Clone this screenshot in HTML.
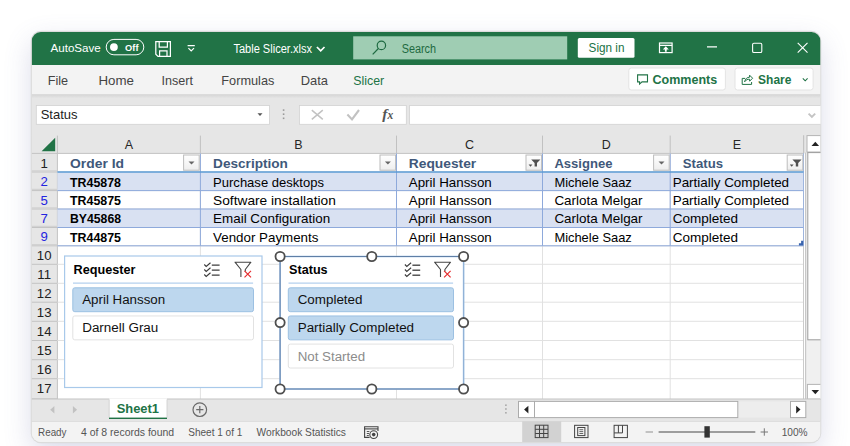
<!DOCTYPE html>
<html lang="en"><head><meta charset="utf-8"><title>Table Slicer.xlsx - Excel</title>
<style>
html,body{margin:0;padding:0;background:#fff;}
body{width:850px;height:446px;overflow:hidden;position:relative;font-family:"Liberation Sans", sans-serif;}
#shadow{position:absolute;left:31.7px;top:32.0px;width:788.8px;height:410.0px;border-radius:9px;box-shadow:0 0 0 1.3px #dcdcdc,0 10px 28px 0 rgba(98,102,165,0.24);background:#f3f3f3;}
svg{position:absolute;left:0;top:0;}
svg text{font-family:"Liberation Sans", sans-serif;white-space:pre;}
</style></head>
<body>
<div id="shadow"></div>
<svg width="850" height="446" viewBox="0 0 850 446">
<defs>
<clipPath id="win"><rect x="31.7" y="32.0" width="788.8" height="410.0" rx="9" ry="9"/></clipPath>
<linearGradient id="fb" x1="0" y1="0" x2="0" y2="1"><stop offset="0" stop-color="#ffffff"/><stop offset="1" stop-color="#eeeeee"/></linearGradient>
<linearGradient id="sh" x1="0" y1="0" x2="0" y2="1"><stop offset="0" stop-color="#d4d4d4"/><stop offset="1" stop-color="#e6e6e6"/></linearGradient>
</defs>
<g clip-path="url(#win)">
<rect x="31.70" y="32.00" width="788.80" height="33.00" fill="#217346" />
<text x="50.50" y="51.70" font-size="11.5" fill="#fff" font-weight="normal" text-anchor="start" textLength="50.30" lengthAdjust="spacingAndGlyphs" >AutoSave</text>
<rect x="106.2" y="39.4" width="37.6" height="15.4" rx="7.7" fill="none" stroke="#fff" stroke-width="1"/>
<circle cx="113.9" cy="47.1" r="3.9" fill="#fff"/>
<text x="125.10" y="50.70" font-size="9.5" fill="#fff" font-weight="bold" text-anchor="start" textLength="13.40" lengthAdjust="spacingAndGlyphs" >Off</text>
<g fill="none" stroke="#fff" stroke-width="1.25"><path d="M155.8 41.6h14.6v14.8h-12.4l-2.2-2.2z"/><path d="M159.2 41.6v5.4h8.2v-5.4"/><path d="M159.6 56.4v-5.6h7.4v5.6"/></g>
<g fill="none" stroke="#fff" stroke-width="1.2"><path d="M187.6 45.6h7.2"/><path d="M188.4 48.2l2.8 2.8l2.8-2.8"/></g>
<text x="233.40" y="53.00" font-size="12" fill="#fff" font-weight="normal" text-anchor="start" textLength="78.60" lengthAdjust="spacingAndGlyphs" >Table Slicer.xlsx</text>
<path d="M316.9 47.0l3.8 3.8l3.8-3.8" fill="none" stroke="#fff" stroke-width="1.7"/>
<rect x="353.20" y="36.30" width="214.00" height="23.10" fill="#9fcdb3" />
<g fill="none" stroke="#1e6a41" stroke-width="1.2"><circle cx="381.4" cy="45.4" r="4.2"/><path d="M378.4 48.5l-5.7 5.8"/></g>
<text x="401.70" y="52.60" font-size="12" fill="#1e6a41" font-weight="normal" text-anchor="start" textLength="34.40" lengthAdjust="spacingAndGlyphs" >Search</text>
<rect x="577.8" y="38.1" width="56.7" height="19.6" rx="1.5" fill="#fff"/>
<text x="588.60" y="52.20" font-size="12" fill="#217346" font-weight="normal" text-anchor="start" textLength="35.90" lengthAdjust="spacingAndGlyphs" >Sign in</text>
<g fill="none" stroke="#fff" stroke-width="1.2"><rect x="659.5" y="43.0" width="12.6" height="9.6"/><path d="M659.5 45.4h12.6"/></g><path d="M662.8 49.4l3-3.2l3 3.2h-2.1v2.4h-1.8v-2.4z" fill="#fff"/>
<line x1="707.00" y1="46.90" x2="717.00" y2="46.90" stroke="#fff" stroke-width="1.1" />
<rect x="752.6" y="43.3" width="9.2" height="9.2" rx="1.3" fill="none" stroke="#fff" stroke-width="1.1"/>
<path d="M797.7 42.8l9.8 9.8M807.5 42.8l-9.8 9.8" fill="none" stroke="#fff" stroke-width="1.1"/>
<rect x="31.70" y="65.00" width="788.80" height="29.30" fill="#f3f3f3" />
<text x="47.70" y="84.90" font-size="13" fill="#444" font-weight="normal" text-anchor="start" textLength="20.40" lengthAdjust="spacingAndGlyphs" >File</text>
<text x="98.50" y="84.90" font-size="13" fill="#444" font-weight="normal" text-anchor="start" textLength="35.50" lengthAdjust="spacingAndGlyphs" >Home</text>
<text x="161.60" y="84.90" font-size="13" fill="#444" font-weight="normal" text-anchor="start" textLength="31.40" lengthAdjust="spacingAndGlyphs" >Insert</text>
<text x="221.30" y="84.90" font-size="13" fill="#444" font-weight="normal" text-anchor="start" textLength="53.10" lengthAdjust="spacingAndGlyphs" >Formulas</text>
<text x="300.70" y="84.90" font-size="13" fill="#444" font-weight="normal" text-anchor="start" textLength="27.20" lengthAdjust="spacingAndGlyphs" >Data</text>
<text x="353.20" y="84.90" font-size="13" fill="#217346" font-weight="normal" text-anchor="start" textLength="31.00" lengthAdjust="spacingAndGlyphs" >Slicer</text>
<rect x="628.8" y="68.0" width="96.6" height="22" rx="2.5" fill="#fff" stroke="#e3e3e3" stroke-width="1"/>
<rect x="735.0" y="68.0" width="78.1" height="22" rx="2.5" fill="#fff" stroke="#e3e3e3" stroke-width="1"/>
<path d="M637.6 74.9h9.9v7h-5.5l-2.4 2.2v-2.2h-2z" fill="none" stroke="#217346" stroke-width="1.1"/>
<text x="652.60" y="84.00" font-size="12.3" fill="#217346" font-weight="bold" text-anchor="start" textLength="64.60" lengthAdjust="spacingAndGlyphs" >Comments</text>
<g fill="none" stroke="#217346" stroke-width="1"><path d="M745.2 78.4h-3v6h9.4v-2.4"/><path d="M744.6 81.8c0.6-3 2.6-4.6 5-4.6v-2l3 3l-3 3v-2c-2 0-3.6 0.6-5 2.6z"/></g>
<text x="758.10" y="84.00" font-size="12.3" fill="#217346" font-weight="bold" text-anchor="start" textLength="33.30" lengthAdjust="spacingAndGlyphs" >Share</text>
<path d="M802.8 78.4l2.4 2.4l2.4-2.4" fill="none" stroke="#217346" stroke-width="1.1"/>
<rect x="31.70" y="94.30" width="788.80" height="41.70" fill="#e6e6e6" />
<rect x="31.7" y="94.3" width="788.6" height="4" fill="url(#sh)"/>
<rect x="36.3" y="105.5" width="233.1" height="18.8" fill="#fff" stroke="#d2d2d2" stroke-width="0.8"/>
<text x="40.70" y="118.70" font-size="12.7" fill="#222" font-weight="normal" text-anchor="start" textLength="36.90" lengthAdjust="spacingAndGlyphs" >Status</text>
<path d="M257.5 113.2h5l-2.5 2.8z" fill="#555"/>
<rect x="282.8" y="109.3" width="1.6" height="1.6" fill="#9a9a9a"/>
<rect x="282.8" y="113.4" width="1.6" height="1.6" fill="#9a9a9a"/>
<rect x="282.8" y="117.5" width="1.6" height="1.6" fill="#9a9a9a"/>
<rect x="299.4" y="105.5" width="106.9" height="18.8" fill="#fff" stroke="#d2d2d2" stroke-width="0.8"/>
<path d="M311.8 110.2l11 9.2M322.8 110.2l-11 9.2" stroke="#c2c2c2" stroke-width="1.5" fill="none"/>
<path d="M347.4 114.6l4.6 4.8l7-9.4" stroke="#c2c2c2" stroke-width="2.1" fill="none"/>
<text x="382.20" y="118.60" font-size="15.5" fill="#555" font-weight="bold" text-anchor="start" style='font-family:"Liberation Serif", serif' font-style="italic">f</text>
<text x="387.60" y="119.40" font-size="11.5" fill="#555" font-weight="bold" text-anchor="start" style='font-family:"Liberation Serif", serif' font-style="italic">x</text>
<rect x="409.6" y="105.5" width="420" height="18.8" fill="#fff" stroke="#d2d2d2" stroke-width="0.8"/>
<path d="M808.6 113.6l3.3 3.4l3.3-3.4" stroke="#c4c4c4" stroke-width="1.9" fill="none"/>
<rect x="31.70" y="135.30" width="788.80" height="263.70" fill="#e6e6e6" />
<rect x="57.40" y="153.40" width="746.20" height="245.60" fill="#fff" />
<path d="M55.2 137.8v13.4h-13.6z" fill="#217346"/>
<line x1="57.40" y1="135.60" x2="57.40" y2="153.40" stroke="#b8b8b8" stroke-width="0.8" />
<line x1="200.40" y1="135.60" x2="200.40" y2="153.40" stroke="#b8b8b8" stroke-width="0.8" />
<line x1="396.50" y1="135.60" x2="396.50" y2="153.40" stroke="#b8b8b8" stroke-width="0.8" />
<line x1="542.50" y1="135.60" x2="542.50" y2="153.40" stroke="#b8b8b8" stroke-width="0.8" />
<line x1="670.20" y1="135.60" x2="670.20" y2="153.40" stroke="#b8b8b8" stroke-width="0.8" />
<line x1="803.60" y1="135.60" x2="803.60" y2="153.40" stroke="#b8b8b8" stroke-width="0.8" />
<line x1="31.70" y1="153.40" x2="803.60" y2="153.40" stroke="#c3c3c3" stroke-width="1" />
<text x="128.90" y="149.40" font-size="12.5" fill="#262626" font-weight="normal" text-anchor="middle" >A</text>
<text x="298.45" y="149.40" font-size="12.5" fill="#262626" font-weight="normal" text-anchor="middle" >B</text>
<text x="469.50" y="149.40" font-size="12.5" fill="#262626" font-weight="normal" text-anchor="middle" >C</text>
<text x="606.35" y="149.40" font-size="12.5" fill="#262626" font-weight="normal" text-anchor="middle" >D</text>
<text x="736.90" y="149.40" font-size="12.5" fill="#262626" font-weight="normal" text-anchor="middle" >E</text>
<line x1="57.40" y1="153.40" x2="57.40" y2="399.00" stroke="#c3c3c3" stroke-width="1" />
<line x1="31.70" y1="172.00" x2="57.40" y2="172.00" stroke="#c3c3c3" stroke-width="1" />
<line x1="31.70" y1="170.80" x2="57.40" y2="170.80" stroke="#d2d2d2" stroke-width="1.2" />
<text x="44.20" y="167.60" font-size="13.2" fill="#222" font-weight="normal" text-anchor="middle" >1</text>
<line x1="31.70" y1="190.60" x2="57.40" y2="190.60" stroke="#c3c3c3" stroke-width="1" />
<line x1="31.70" y1="189.40" x2="57.40" y2="189.40" stroke="#d2d2d2" stroke-width="1.2" />
<text x="44.20" y="186.20" font-size="13.2" fill="#2424e0" font-weight="normal" text-anchor="middle" >2</text>
<line x1="31.70" y1="209.00" x2="57.40" y2="209.00" stroke="#c3c3c3" stroke-width="1" />
<line x1="31.70" y1="207.80" x2="57.40" y2="207.80" stroke="#d2d2d2" stroke-width="1.2" />
<text x="44.20" y="204.60" font-size="13.2" fill="#2424e0" font-weight="normal" text-anchor="middle" >5</text>
<line x1="31.70" y1="227.50" x2="57.40" y2="227.50" stroke="#c3c3c3" stroke-width="1" />
<line x1="31.70" y1="226.30" x2="57.40" y2="226.30" stroke="#d2d2d2" stroke-width="1.2" />
<text x="44.20" y="223.10" font-size="13.2" fill="#2424e0" font-weight="normal" text-anchor="middle" >7</text>
<line x1="31.70" y1="245.80" x2="57.40" y2="245.80" stroke="#c3c3c3" stroke-width="1" />
<line x1="31.70" y1="244.60" x2="57.40" y2="244.60" stroke="#d2d2d2" stroke-width="1.2" />
<text x="44.20" y="241.40" font-size="13.2" fill="#2424e0" font-weight="normal" text-anchor="middle" >9</text>
<line x1="31.70" y1="264.30" x2="57.40" y2="264.30" stroke="#c3c3c3" stroke-width="1" />
<text x="44.20" y="259.90" font-size="13.2" fill="#222" font-weight="normal" text-anchor="middle" >10</text>
<line x1="31.70" y1="283.30" x2="57.40" y2="283.30" stroke="#c3c3c3" stroke-width="1" />
<text x="44.20" y="278.90" font-size="13.2" fill="#222" font-weight="normal" text-anchor="middle" >11</text>
<line x1="31.70" y1="302.20" x2="57.40" y2="302.20" stroke="#c3c3c3" stroke-width="1" />
<text x="44.20" y="297.80" font-size="13.2" fill="#222" font-weight="normal" text-anchor="middle" >12</text>
<line x1="31.70" y1="321.30" x2="57.40" y2="321.30" stroke="#c3c3c3" stroke-width="1" />
<text x="44.20" y="316.90" font-size="13.2" fill="#222" font-weight="normal" text-anchor="middle" >13</text>
<line x1="31.70" y1="340.50" x2="57.40" y2="340.50" stroke="#c3c3c3" stroke-width="1" />
<text x="44.20" y="336.10" font-size="13.2" fill="#222" font-weight="normal" text-anchor="middle" >14</text>
<line x1="31.70" y1="359.70" x2="57.40" y2="359.70" stroke="#c3c3c3" stroke-width="1" />
<text x="44.20" y="355.30" font-size="13.2" fill="#222" font-weight="normal" text-anchor="middle" >15</text>
<line x1="31.70" y1="378.70" x2="57.40" y2="378.70" stroke="#c3c3c3" stroke-width="1" />
<text x="44.20" y="374.30" font-size="13.2" fill="#222" font-weight="normal" text-anchor="middle" >16</text>
<line x1="31.70" y1="399.00" x2="57.40" y2="399.00" stroke="#c3c3c3" stroke-width="1" />
<text x="44.20" y="393.30" font-size="13.2" fill="#222" font-weight="normal" text-anchor="middle" >17</text>
<line x1="200.40" y1="153.40" x2="200.40" y2="399.00" stroke="#e1e1e1" stroke-width="1" />
<line x1="396.50" y1="153.40" x2="396.50" y2="399.00" stroke="#e1e1e1" stroke-width="1" />
<line x1="542.50" y1="153.40" x2="542.50" y2="399.00" stroke="#e1e1e1" stroke-width="1" />
<line x1="670.20" y1="153.40" x2="670.20" y2="399.00" stroke="#e1e1e1" stroke-width="1" />
<line x1="803.60" y1="153.40" x2="803.60" y2="399.00" stroke="#e1e1e1" stroke-width="1" />
<line x1="57.40" y1="172.00" x2="803.60" y2="172.00" stroke="#e1e1e1" stroke-width="1" />
<line x1="57.40" y1="190.60" x2="803.60" y2="190.60" stroke="#e1e1e1" stroke-width="1" />
<line x1="57.40" y1="209.00" x2="803.60" y2="209.00" stroke="#e1e1e1" stroke-width="1" />
<line x1="57.40" y1="227.50" x2="803.60" y2="227.50" stroke="#e1e1e1" stroke-width="1" />
<line x1="57.40" y1="245.80" x2="803.60" y2="245.80" stroke="#e1e1e1" stroke-width="1" />
<line x1="57.40" y1="264.30" x2="803.60" y2="264.30" stroke="#e1e1e1" stroke-width="1" />
<line x1="57.40" y1="283.30" x2="803.60" y2="283.30" stroke="#e1e1e1" stroke-width="1" />
<line x1="57.40" y1="302.20" x2="803.60" y2="302.20" stroke="#e1e1e1" stroke-width="1" />
<line x1="57.40" y1="321.30" x2="803.60" y2="321.30" stroke="#e1e1e1" stroke-width="1" />
<line x1="57.40" y1="340.50" x2="803.60" y2="340.50" stroke="#e1e1e1" stroke-width="1" />
<line x1="57.40" y1="359.70" x2="803.60" y2="359.70" stroke="#e1e1e1" stroke-width="1" />
<line x1="57.40" y1="378.70" x2="803.60" y2="378.70" stroke="#e1e1e1" stroke-width="1" />
<line x1="803.60" y1="135.30" x2="803.60" y2="399.00" stroke="#c3c3c3" stroke-width="1" />
<rect x="57.40" y="172.00" width="746.20" height="18.60" fill="#d9e1f2" />
<rect x="57.40" y="209.00" width="746.20" height="18.50" fill="#d9e1f2" />
<line x1="57.40" y1="190.60" x2="803.60" y2="190.60" stroke="#8ea9db" stroke-width="1" />
<line x1="57.40" y1="209.00" x2="803.60" y2="209.00" stroke="#8ea9db" stroke-width="1" />
<line x1="57.40" y1="227.50" x2="803.60" y2="227.50" stroke="#8ea9db" stroke-width="1" />
<line x1="57.40" y1="245.80" x2="803.60" y2="245.80" stroke="#8ea9db" stroke-width="1" />
<line x1="200.40" y1="153.40" x2="200.40" y2="245.80" stroke="#8ea9db" stroke-width="1" />
<line x1="396.50" y1="153.40" x2="396.50" y2="245.80" stroke="#8ea9db" stroke-width="1" />
<line x1="542.50" y1="153.40" x2="542.50" y2="245.80" stroke="#8ea9db" stroke-width="1" />
<line x1="670.20" y1="153.40" x2="670.20" y2="245.80" stroke="#8ea9db" stroke-width="1" />
<line x1="803.60" y1="153.40" x2="803.60" y2="245.80" stroke="#8ea9db" stroke-width="1" />
<line x1="57.40" y1="172.00" x2="803.60" y2="172.00" stroke="#5b9bd5" stroke-width="1.7" />
<text x="70.00" y="167.70" font-size="13.0" fill="#40587a" font-weight="bold" text-anchor="start" textLength="54.00" lengthAdjust="spacingAndGlyphs" >Order Id</text>
<text x="213.10" y="167.70" font-size="13.0" fill="#40587a" font-weight="bold" text-anchor="start" textLength="74.80" lengthAdjust="spacingAndGlyphs" >Description</text>
<text x="408.80" y="167.70" font-size="13.0" fill="#40587a" font-weight="bold" text-anchor="start" textLength="67.40" lengthAdjust="spacingAndGlyphs" >Requester</text>
<text x="554.40" y="167.70" font-size="13.0" fill="#40587a" font-weight="bold" text-anchor="start" textLength="58.10" lengthAdjust="spacingAndGlyphs" >Assignee</text>
<text x="682.80" y="167.70" font-size="13.0" fill="#40587a" font-weight="bold" text-anchor="start" textLength="40.20" lengthAdjust="spacingAndGlyphs" >Status</text>
<rect x="183.60" y="155.0" width="15.6" height="15.2" fill="url(#fb)" stroke="#bcbcbc" stroke-width="1"/>
<path d="M188.50 161.5h6l-3 3z" fill="#666"/>
<rect x="380.00" y="155.0" width="15.6" height="15.2" fill="url(#fb)" stroke="#bcbcbc" stroke-width="1"/>
<path d="M384.90 161.5h6l-3 3z" fill="#666"/>
<rect x="526.00" y="155.0" width="15.6" height="15.2" fill="url(#fb)" stroke="#bcbcbc" stroke-width="1"/>
<path d="M531.20 159.6h9.2l-3.4 3.5v3.4h-2.4v-3.4z" fill="#505050"/>
<path d="M528.60 164.6h3.8l-1.9 2.1z" fill="#505050"/>
<rect x="653.60" y="155.0" width="15.6" height="15.2" fill="url(#fb)" stroke="#bcbcbc" stroke-width="1"/>
<path d="M658.50 161.5h6l-3 3z" fill="#666"/>
<rect x="787.20" y="155.0" width="15.6" height="15.2" fill="url(#fb)" stroke="#bcbcbc" stroke-width="1"/>
<path d="M792.40 159.6h9.2l-3.4 3.5v3.4h-2.4v-3.4z" fill="#505050"/>
<path d="M789.80 164.6h3.8l-1.9 2.1z" fill="#505050"/>
<text x="70.00" y="186.50" font-size="12.2" fill="#000" font-weight="bold" text-anchor="start" textLength="51.00" lengthAdjust="spacingAndGlyphs" >TR45878</text>
<text x="213.10" y="186.50" font-size="12.2" fill="#000" font-weight="normal" text-anchor="start" textLength="110.80" lengthAdjust="spacingAndGlyphs" >Purchase desktops</text>
<text x="408.80" y="186.50" font-size="12.2" fill="#000" font-weight="normal" text-anchor="start" textLength="83.00" lengthAdjust="spacingAndGlyphs" >April Hansson</text>
<text x="554.40" y="186.50" font-size="12.2" fill="#000" font-weight="normal" text-anchor="start" textLength="77.40" lengthAdjust="spacingAndGlyphs" >Michele Saaz</text>
<text x="672.70" y="186.50" font-size="12.2" fill="#000" font-weight="normal" text-anchor="start" textLength="116.40" lengthAdjust="spacingAndGlyphs" >Partially Completed</text>
<text x="70.00" y="204.90" font-size="12.2" fill="#000" font-weight="bold" text-anchor="start" textLength="51.00" lengthAdjust="spacingAndGlyphs" >TR45875</text>
<text x="213.10" y="204.90" font-size="12.2" fill="#000" font-weight="normal" text-anchor="start" textLength="122.70" lengthAdjust="spacingAndGlyphs" >Software installation</text>
<text x="408.80" y="204.90" font-size="12.2" fill="#000" font-weight="normal" text-anchor="start" textLength="83.00" lengthAdjust="spacingAndGlyphs" >April Hansson</text>
<text x="554.40" y="204.90" font-size="12.2" fill="#000" font-weight="normal" text-anchor="start" textLength="88.20" lengthAdjust="spacingAndGlyphs" >Carlota Melgar</text>
<text x="672.70" y="204.90" font-size="12.2" fill="#000" font-weight="normal" text-anchor="start" textLength="116.40" lengthAdjust="spacingAndGlyphs" >Partially Completed</text>
<text x="70.00" y="223.40" font-size="12.2" fill="#000" font-weight="bold" text-anchor="start" textLength="51.00" lengthAdjust="spacingAndGlyphs" >BY45868</text>
<text x="213.10" y="223.40" font-size="12.2" fill="#000" font-weight="normal" text-anchor="start" textLength="117.10" lengthAdjust="spacingAndGlyphs" >Email Configuration</text>
<text x="408.80" y="223.40" font-size="12.2" fill="#000" font-weight="normal" text-anchor="start" textLength="83.00" lengthAdjust="spacingAndGlyphs" >April Hansson</text>
<text x="554.40" y="223.40" font-size="12.2" fill="#000" font-weight="normal" text-anchor="start" textLength="88.20" lengthAdjust="spacingAndGlyphs" >Carlota Melgar</text>
<text x="672.70" y="223.40" font-size="12.2" fill="#000" font-weight="normal" text-anchor="start" textLength="65.40" lengthAdjust="spacingAndGlyphs" >Completed</text>
<text x="70.00" y="241.70" font-size="12.2" fill="#000" font-weight="bold" text-anchor="start" textLength="51.00" lengthAdjust="spacingAndGlyphs" >TR44875</text>
<text x="213.10" y="241.70" font-size="12.2" fill="#000" font-weight="normal" text-anchor="start" textLength="105.30" lengthAdjust="spacingAndGlyphs" >Vendor Payments</text>
<text x="408.80" y="241.70" font-size="12.2" fill="#000" font-weight="normal" text-anchor="start" textLength="83.00" lengthAdjust="spacingAndGlyphs" >April Hansson</text>
<text x="554.40" y="241.70" font-size="12.2" fill="#000" font-weight="normal" text-anchor="start" textLength="77.40" lengthAdjust="spacingAndGlyphs" >Michele Saaz</text>
<text x="672.70" y="241.70" font-size="12.2" fill="#000" font-weight="normal" text-anchor="start" textLength="65.40" lengthAdjust="spacingAndGlyphs" >Completed</text>
<path d="M803.3 240.8v4.6h-4.4v-2.2h2.2v-2.4z" fill="#3a64ae"/>
<rect x="803.90" y="153.40" width="1.40" height="245.60" fill="#fff" />
<line x1="805.80" y1="152.60" x2="805.80" y2="399.00" stroke="#b8b8b8" stroke-width="1" />
<rect x="806.30" y="152.20" width="14.20" height="246.80" fill="#f0f0f0" />
<rect x="807.0" y="135.6" width="14" height="16.4" fill="#fff" stroke="#b4b4b4" stroke-width="1"/>
<rect x="807.8" y="152.6" width="14" height="187.2" fill="#fff" stroke="#9c9c9c" stroke-width="1"/>
<rect x="807.4" y="384.4" width="14" height="14.8" fill="#fff" stroke="#b4b4b4" stroke-width="1"/>
<path d="M811.5 145.9h7.6l-3.8-4.2z" fill="#222"/>
<path d="M811.5 390.0h7.6l-3.8 4.2z" fill="#222"/>
<rect x="64.60" y="256.00" width="197.40" height="131.50" fill="#fff" stroke="#a8c9ea" stroke-width="1.2"/>
<text x="73.60" y="273.60" font-size="12.0" fill="#000" font-weight="bold" text-anchor="start" textLength="61.90" lengthAdjust="spacingAndGlyphs" >Requester</text>
<line x1="73.00" y1="283.20" x2="253.10" y2="283.20" stroke="#b4d0ee" stroke-width="1.2" />
<g fill="none" stroke="#3c3c3c" stroke-width="1.15"><path d="M204.30 264.50l1.9 1.9l4.3-3.6"/><path d="M211.80 265.20h7.8" stroke-width="1.3"/><path d="M204.30 269.50l1.9 1.9l4.3-3.6"/><path d="M211.80 270.20h7.8" stroke-width="1.3"/><path d="M204.30 274.50l1.9 1.9l4.3-3.6"/><path d="M211.80 275.20h7.8" stroke-width="1.3"/></g>
<path d="M240.90 277v-7.5l-5.9-7.3h15.9l-5.6 7.3v2" fill="none" stroke="#444" stroke-width="1.1" stroke-linejoin="round"/>
<path d="M244.50 270.8l6.5 6.6M251.00 270.8l-6.5 6.6" fill="none" stroke="#e62e30" stroke-width="1.2"/>
<rect x="72.80" y="287.80" width="180.70" height="23.9" rx="2" fill="#bdd7ee" stroke="#9cc0e2" stroke-width="1"/>
<text x="82.20" y="304.20" font-size="12.3" fill="#111" font-weight="normal" text-anchor="start" textLength="83.00" lengthAdjust="spacingAndGlyphs" >April Hansson</text>
<rect x="72.80" y="315.95" width="180.70" height="23.9" rx="2" fill="#fff" stroke="#e2e2e2" stroke-width="1"/>
<text x="82.20" y="332.35" font-size="12.3" fill="#111" font-weight="normal" text-anchor="start" textLength="76.10" lengthAdjust="spacingAndGlyphs" >Darnell Grau</text>
<rect x="280.10" y="256.50" width="183.50" height="132.50" fill="#fff" />
<text x="289.10" y="274.10" font-size="12.0" fill="#000" font-weight="bold" text-anchor="start" textLength="38.50" lengthAdjust="spacingAndGlyphs" >Status</text>
<line x1="288.50" y1="283.20" x2="453.10" y2="283.20" stroke="#b4d0ee" stroke-width="1.2" />
<g fill="none" stroke="#3c3c3c" stroke-width="1.15"><path d="M404.90 264.50l1.9 1.9l4.3-3.6"/><path d="M412.40 265.20h7.8" stroke-width="1.3"/><path d="M404.90 269.50l1.9 1.9l4.3-3.6"/><path d="M412.40 270.20h7.8" stroke-width="1.3"/><path d="M404.90 274.50l1.9 1.9l4.3-3.6"/><path d="M412.40 275.20h7.8" stroke-width="1.3"/></g>
<path d="M440.50 277v-7.5l-5.9-7.3h15.9l-5.6 7.3v2" fill="none" stroke="#444" stroke-width="1.1" stroke-linejoin="round"/>
<path d="M444.10 270.8l6.5 6.6M450.60 270.8l-6.5 6.6" fill="none" stroke="#e62e30" stroke-width="1.2"/>
<rect x="288.30" y="287.80" width="165.20" height="23.9" rx="2" fill="#bdd7ee" stroke="#9cc0e2" stroke-width="1"/>
<text x="297.70" y="304.20" font-size="12.3" fill="#111" font-weight="normal" text-anchor="start" textLength="64.80" lengthAdjust="spacingAndGlyphs" >Completed</text>
<rect x="288.30" y="315.95" width="165.20" height="23.9" rx="2" fill="#bdd7ee" stroke="#9cc0e2" stroke-width="1"/>
<text x="297.70" y="332.35" font-size="12.3" fill="#111" font-weight="normal" text-anchor="start" textLength="116.40" lengthAdjust="spacingAndGlyphs" >Partially Completed</text>
<rect x="288.30" y="344.10" width="165.20" height="23.9" rx="2" fill="#fff" stroke="#e2e2e2" stroke-width="1"/>
<text x="297.70" y="360.50" font-size="12.3" fill="#8c8c8c" font-weight="normal" text-anchor="start" textLength="67.40" lengthAdjust="spacingAndGlyphs" >Not Started</text>
<rect x="280.1" y="256.5" width="183.5" height="132.5" fill="none" stroke="#a9c6e8" stroke-width="1.6"/>
<path d="M463.6 256.5h-183.5v132.5h183.5" fill="none" stroke="#5f7fa6" stroke-width="1"/>
<path d="M463.6 256.5v132.5" fill="none" stroke="#8fb0d6" stroke-width="1"/>
<circle cx="280.1" cy="256.5" r="4.6" fill="#fff" stroke="#4e4e4e" stroke-width="1.8"/>
<circle cx="371.8" cy="256.5" r="4.6" fill="#fff" stroke="#4e4e4e" stroke-width="1.8"/>
<circle cx="463.6" cy="256.5" r="4.6" fill="#fff" stroke="#4e4e4e" stroke-width="1.8"/>
<circle cx="280.1" cy="322.6" r="4.6" fill="#fff" stroke="#4e4e4e" stroke-width="1.8"/>
<circle cx="463.6" cy="322.6" r="4.6" fill="#fff" stroke="#4e4e4e" stroke-width="1.8"/>
<circle cx="280.1" cy="389.0" r="4.6" fill="#fff" stroke="#4e4e4e" stroke-width="1.8"/>
<circle cx="371.8" cy="389.0" r="4.6" fill="#fff" stroke="#4e4e4e" stroke-width="1.8"/>
<circle cx="463.6" cy="389.0" r="4.6" fill="#fff" stroke="#4e4e4e" stroke-width="1.8"/>
<rect x="31.70" y="399.00" width="788.80" height="22.40" fill="#e6e6e6" />
<line x1="31.70" y1="399.00" x2="820.50" y2="399.00" stroke="#c3c3c3" stroke-width="1" />
<path d="M54.4 405.9v7.6l-4.2-3.8z" fill="#c2c2c2"/><path d="M72.9 405.9v7.6l4.2-3.8z" fill="#c2c2c2"/>
<rect x="109.20" y="398.40" width="57.80" height="19.40" fill="#fff" />
<line x1="109.20" y1="399.40" x2="109.20" y2="417.60" stroke="#cdcdcd" stroke-width="0.8" />
<line x1="167.00" y1="399.40" x2="167.00" y2="417.60" stroke="#cdcdcd" stroke-width="0.8" />
<rect x="109.00" y="417.60" width="58.00" height="1.40" fill="#217346" />
<text x="116.70" y="413.40" font-size="12.8" fill="#217346" font-weight="bold" text-anchor="start" textLength="42.30" lengthAdjust="spacingAndGlyphs" >Sheet1</text>
<g fill="none" stroke="#6a6a6a" stroke-width="1.2"><circle cx="199.8" cy="409.7" r="6.8"/><path d="M196.2 409.7h7.2M199.8 406.1v7.2"/></g>
<rect x="505.1" y="404.4" width="1.6" height="1.6" fill="#a8a8a8"/>
<rect x="505.1" y="408.2" width="1.6" height="1.6" fill="#a8a8a8"/>
<rect x="505.1" y="412.0" width="1.6" height="1.6" fill="#a8a8a8"/>
<rect x="518.50" y="401.40" width="287.30" height="16.20" fill="#ededed" />
<rect x="518.5" y="401.4" width="16" height="16.2" fill="#fff" stroke="#ababab" stroke-width="1"/>
<rect x="534.5" y="401.4" width="203.3" height="16.2" fill="#fff" stroke="#ababab" stroke-width="1"/>
<rect x="790.5" y="401.4" width="15.3" height="16.2" fill="#fff" stroke="#ababab" stroke-width="1"/>
<path d="M528.4 405.7v7.8l-4.3-3.9z" fill="#222"/>
<path d="M796.2 405.7v7.8l4.3-3.9z" fill="#222"/>
<rect x="31.70" y="421.40" width="788.80" height="20.60" fill="#f3f3f3" />
<line x1="31.70" y1="421.40" x2="820.50" y2="421.40" stroke="#dcdcdc" stroke-width="1" />
<text x="38.10" y="436.30" font-size="10.6" fill="#555" font-weight="normal" text-anchor="start" textLength="28.40" lengthAdjust="spacingAndGlyphs" >Ready</text>
<text x="81.00" y="436.30" font-size="10.6" fill="#555" font-weight="normal" text-anchor="start" textLength="93.10" lengthAdjust="spacingAndGlyphs" >4 of 8 records found</text>
<text x="188.20" y="436.30" font-size="10.6" fill="#555" font-weight="normal" text-anchor="start" textLength="54.20" lengthAdjust="spacingAndGlyphs" >Sheet 1 of 1</text>
<text x="256.60" y="436.30" font-size="10.6" fill="#555" font-weight="normal" text-anchor="start" textLength="89.30" lengthAdjust="spacingAndGlyphs" >Workbook Statistics</text>
<g fill="none" stroke="#444" stroke-width="1.1"><path d="M378 431v-4.3h-13.4v10.7h5"/><path d="M364.6 428.9h13.4"/><path d="M366.8 431.5h2.6M366.8 433.5h2.2M366.8 435.5h2" stroke-width="0.9"/><circle cx="373.7" cy="434.6" r="3.9" fill="#f3f3f3"/></g><circle cx="373.7" cy="434.6" r="1.8" fill="#444"/>
<rect x="522.20" y="421.30" width="39.00" height="20.70" fill="#d2d2d2" />
<g fill="none" stroke="#444" stroke-width="1"><rect x="535.2" y="425.2" width="12.8" height="12.4"/><path d="M539.5 425.2v12.4M543.7 425.2v12.4M535.2 429.3h12.8M535.2 433.5h12.8"/></g>
<g fill="none" stroke="#444" stroke-width="1"><rect x="574.6" y="425.3" width="13.4" height="12.3"/><rect x="577.7" y="427.5" width="7.2" height="8.1"/><path d="M579.4 429.7h3.8M579.4 431.6h3.8M579.4 433.5h3.8" stroke-width="0.8"/></g>
<g fill="none" stroke="#444" stroke-width="1"><rect x="614.1" y="425.3" width="13.3" height="12.3"/><path d="M618.4 425.3v7.6M622.5 425.3v7.6M614.1 432.9h8.4"/></g>
<line x1="645.60" y1="432.00" x2="653.00" y2="432.00" stroke="#9a9a9a" stroke-width="1.1" />
<line x1="658.60" y1="432.00" x2="755.30" y2="432.00" stroke="#484848" stroke-width="1.2" />
<rect x="704.40" y="426.20" width="5.40" height="11.40" fill="#333" />
<path d="M760.6 432h7.4M764.3 428.3v7.4" stroke="#777" stroke-width="1" fill="none"/>
<text x="781.70" y="436.20" font-size="10.4" fill="#555" font-weight="normal" text-anchor="start" textLength="25.90" lengthAdjust="spacingAndGlyphs" >100%</text>
</g>
</svg>
</body></html>
